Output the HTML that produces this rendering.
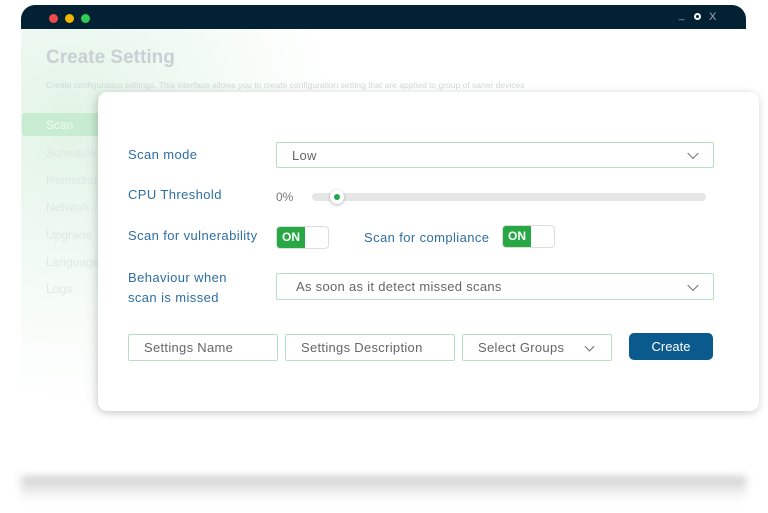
<!DOCTYPE html><html><head><style>
*{box-sizing:border-box;margin:0;padding:0}
body{width:768px;height:513px;background:#fff;position:relative;overflow:hidden;font-family:"Liberation Sans",sans-serif}
.abs{position:absolute}
.tb{left:21px;top:5px;width:725px;height:24px;background:#022233;border-radius:14px 14px 0 0}
.dot{width:9px;height:9px;border-radius:50%;top:14px}
.glow{left:21px;top:29px;width:320px;height:380px;background:radial-gradient(ellipse at 15% 25%,#e2f4e6 0%,#f4fbf6 40%,#fff 70%)}
.side{color:#dfe8e4;font-size:12px;left:46px}
.lbl{color:#2d6ea3;font-size:13px;letter-spacing:.4px}
.box{border:1px solid #b6e2c0;border-radius:2px;background:#fff;color:#666;font-size:13px;letter-spacing:.3px;padding-left:15px;display:flex;align-items:center}
.chev{position:absolute;right:16px;top:50%;width:8px;height:8px;border-right:1.4px solid #666;border-bottom:1.4px solid #666;transform:translateY(-70%) rotate(45deg)}
.tog{width:53px;height:23px;border:1px solid #ddd;border-radius:4px;overflow:hidden}
.tog span{display:block;width:28px;height:100%;background:#28a745;color:#fff;font-size:12px;font-weight:bold;line-height:21px;text-align:center}
</style></head><body>
<div class="abs glow"></div>
<div class="abs tb"></div>
<div class="abs dot" style="left:49px;background:#f04b4b"></div>
<div class="abs dot" style="left:65px;background:#f4b400"></div>
<div class="abs dot" style="left:81px;background:#2ecc55"></div>
<div class="abs" style="left:679px;top:10px;color:#aab;font-size:10px">_</div>
<div class="abs" style="left:694px;top:13px;width:7px;height:7px;border:2px solid #fff;border-radius:50%"></div>
<div class="abs" style="left:709px;top:11px;color:#aab;font-size:11px">X</div>
<div class="abs" style="left:46px;top:47px;color:#c8d0d4;font-size:19px;font-weight:bold">Create Setting</div>
<div class="abs" style="left:46px;top:80px;color:#d0d8d8;font-size:8.5px">Create configuration settings. This interface allows you to create configuration setting that are applied to group of saner devices</div>
<div class="abs" style="left:22px;top:113px;width:80px;height:23px;background:#c8ecd2;border-radius:3px"></div>
<div class="abs side" style="top:118px;color:#f2fbf4">Scan</div>
<div class="abs side" style="top:146px">Schedule</div>
<div class="abs side" style="top:173px">Remediation</div>
<div class="abs side" style="top:200px">Network</div>
<div class="abs side" style="top:228px">Upgrade</div>
<div class="abs side" style="top:255px">Language</div>
<div class="abs side" style="top:282px">Logs</div>
<div class="abs" style="left:21px;top:476px;width:725px;height:26px;background:linear-gradient(#ccc,#f4f4f4 70%,#fff);filter:blur(4px)"></div>
<div class="abs" style="left:98px;top:92px;width:661px;height:319px;background:#fff;border-radius:9px;box-shadow:0 2px 8px rgba(0,0,0,.18),-6px 0 10px rgba(0,0,0,.05)"></div>
<div class="abs lbl" style="left:128px;top:147px">Scan mode</div>
<div class="abs box" style="left:276px;top:142px;width:438px;height:26px">Low<i class="chev"></i></div>
<div class="abs lbl" style="left:128px;top:187px">CPU Threshold</div>
<div class="abs" style="left:276px;top:190px;color:#777;font-size:12px">0%</div>
<div class="abs" style="left:312px;top:193px;width:394px;height:8px;background:#e6e6e6;border-radius:4px"></div>
<div class="abs" style="left:330px;top:190px;width:14px;height:14px;background:#fff;border-radius:50%;box-shadow:0 1px 3px rgba(0,0,0,.3)"></div>
<div class="abs" style="left:334px;top:194px;width:6px;height:6px;background:#22a84a;border-radius:50%"></div>
<div class="abs lbl" style="left:128px;top:228px">Scan for vulnerability</div>
<div class="abs tog" style="left:276px;top:226px"><span>ON</span></div>
<div class="abs lbl" style="left:364px;top:230px">Scan for compliance</div>
<div class="abs tog" style="left:502px;top:225px"><span>ON</span></div>
<div class="abs lbl" style="left:128px;top:268px;line-height:20px">Behaviour when<br>scan is missed</div>
<div class="abs box" style="left:276px;top:273px;width:438px;height:27px;padding-left:19px">As soon as it detect missed scans<i class="chev"></i></div>
<div class="abs box" style="left:128px;top:334px;width:150px;height:27px">Settings Name</div>
<div class="abs box" style="left:285px;top:334px;width:170px;height:27px">Settings Description</div>
<div class="abs box" style="left:462px;top:334px;width:150px;height:27px">Select Groups<i class="chev" style="right:18px;width:7px;height:7px;border-width:1px"></i></div>
<div class="abs" style="left:629px;top:333px;width:84px;height:27px;background:#0b5a8e;border-radius:5px;color:#fff;font-size:13px;text-align:center;line-height:27px">Create</div>
</body></html>
